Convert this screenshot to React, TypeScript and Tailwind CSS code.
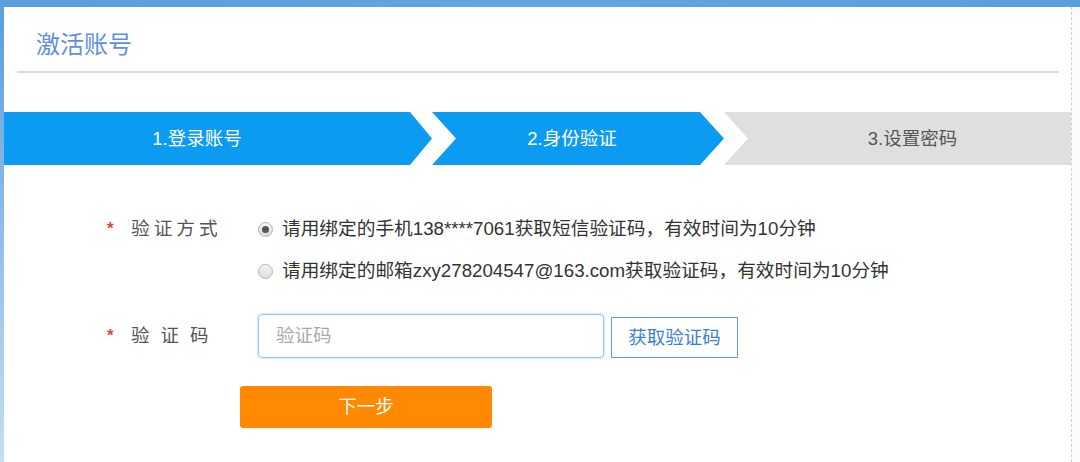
import React from "react";

const font = "font-['Liberation_Sans','Noto_Sans_CJK_SC',sans-serif]";

function Radio({ checked }: { checked?: boolean }) {
  return (
    <span className="flex h-[15px] w-[15px] items-center justify-center rounded-full border border-[#b5b5b5] bg-gradient-to-b from-[#f4f4f4] to-[#dcdcdc]">
      {checked && <span className="h-[7px] w-[7px] rounded-full bg-[#555]" />}
    </span>
  );
}

export default function App() {
  return (
    <div className={`flex h-[462px] w-[1080px] flex-col overflow-hidden bg-white ${font}`}>
      {/* window top edge */}
      <div className="h-[7px] bg-gradient-to-r from-[#5a9edd] via-[#62a5e0] to-[#5a9edd]" />

      <div className="flex flex-1">
        <div className="w-[4px] bg-gradient-to-b from-[#5a9edd] to-[#c4def5]" />

        <div className="flex w-[1068px] flex-col border-r border-dashed border-[#cfcfcf]">
          <h1 className="ml-[32px] mt-[23px] h-[30px] text-[24px] leading-[30px] text-[#5f90d8]">激活账号</h1>
          <div className="ml-[13px] mt-[11px] h-[2px] w-[1042px] bg-[#dcdcdc]" />

          {/* steps */}
          <div className="mt-[39px] flex h-[53px] text-[18.5px]">
            <div className="flex w-[428px] items-center justify-center bg-[#0b9bf1] pr-[42px] text-white [clip-path:polygon(0_0,calc(100%_-_22px)_0,100%_50%,calc(100%_-_22px)_100%,0_100%)]">
              1.登录账号
            </div>
            <div className="flex w-[292px] items-center justify-center bg-[#0b9bf1] pr-[12px] text-white [clip-path:polygon(0_0,calc(100%_-_24px)_0,100%_50%,calc(100%_-_24px)_100%,0_100%,24px_50%)]">
              2.身份验证
            </div>
            <div className="flex flex-1 items-center justify-center bg-[#dfdfdf] pl-[30px] text-[#555] [clip-path:polygon(0_0,100%_0,100%_100%,0_100%,24px_50%)]">
              3.设置密码
            </div>
          </div>

          {/* form */}
          <div className="mt-[43px] flex pl-[103px] text-[18.7px]">
            <span className="flex h-[42px] w-[24px] items-center text-[17px] font-bold text-[#f23c3c]">*</span>
            <span className="flex h-[42px] w-[127px] items-center tracking-[4px] text-[#555]">验证方式</span>
            <div className="flex flex-col text-[#333]">
              <label className="flex h-[42px] items-center gap-[9px]">
                <Radio checked />
                请用绑定的手机138****7061获取短信验证码，有效时间为10分钟
              </label>
              <label className="flex h-[42px] items-center gap-[9px]">
                <Radio />
                请用绑定的邮箱zxy278204547@163.com获取验证码，有效时间为10分钟
              </label>
            </div>
          </div>

          <div className="mt-[22px] flex items-center pl-[103px] text-[18.5px]">
            <span className="w-[24px] text-[17px] font-bold text-[#f23c3c]">*</span>
            <span className="w-[127px] tracking-[11px] text-[#555]">验证码</span>
            <div className="flex items-end">
              <div className="flex h-[44px] w-[346px] items-center rounded-[4px] border border-[#92c4ef] pl-[17px] text-[#aaa] shadow-[0_0_3px_rgba(90,160,235,0.45)]">
                验证码
              </div>
              <button className="ml-[7px] h-[41px] w-[127px] border border-[#5f9fe4] bg-white text-[#3d7fd1]">
                获取验证码
              </button>
            </div>
          </div>

          <button className="ml-[236px] mt-[28px] h-[42px] w-[252px] rounded-[3px] bg-[#ff8900] text-[18.5px] text-white">
            下一步
          </button>
        </div>

        <div className="flex-1 bg-[#fbfbfb]" />
      </div>
    </div>
  );
}
